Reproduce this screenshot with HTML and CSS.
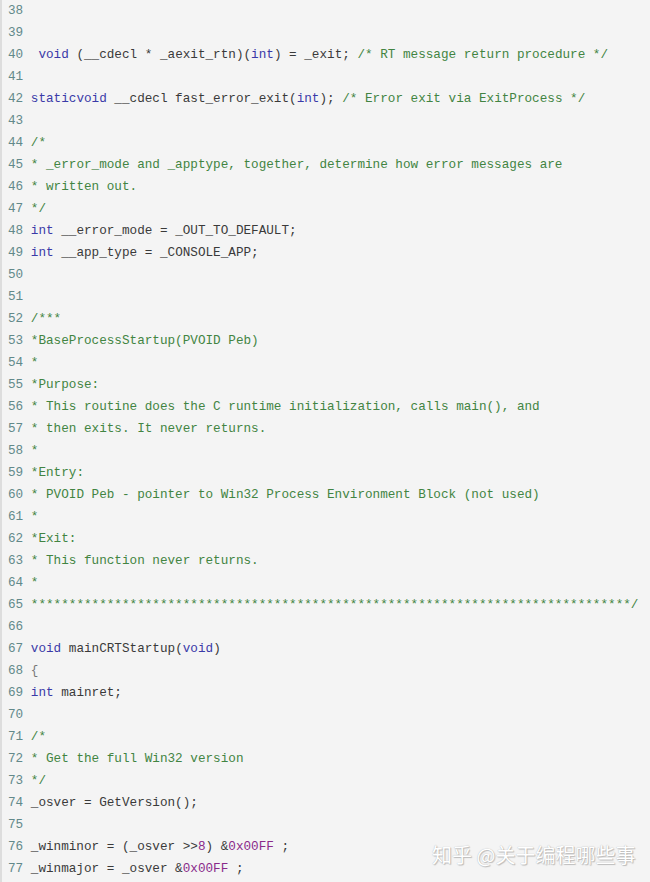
FILE: index.html
```html
<!DOCTYPE html>
<html>
<head>
<meta charset="utf-8">
<link rel="stylesheet" href="styles.css">
</head>
<body>
<div class="code">
<div class="line"><span class="ln">38</span></div>
<div class="line"><span class="ln">39</span></div>
<div class="line"><span class="ln">40</span>  <span class="kw">void</span> (__cdecl * _aexit_rtn)(<span class="kw">int</span>) = _exit; <span class="cm">/* RT message return procedure */</span></div>
<div class="line"><span class="ln">41</span></div>
<div class="line"><span class="ln">42</span> <span class="kw">staticvoid</span> __cdecl fast_error_exit(<span class="kw">int</span>); <span class="cm">/* Error exit via ExitProcess */</span></div>
<div class="line"><span class="ln">43</span></div>
<div class="line"><span class="ln">44</span> <span class="cm">/*</span></div>
<div class="line"><span class="ln">45</span> <span class="cm">* _error_mode and _apptype, together, determine how error messages are</span></div>
<div class="line"><span class="ln">46</span> <span class="cm">* written out.</span></div>
<div class="line"><span class="ln">47</span> <span class="cm">*/</span></div>
<div class="line"><span class="ln">48</span> <span class="kw">int</span> __error_mode = _OUT_TO_DEFAULT;</div>
<div class="line"><span class="ln">49</span> <span class="kw">int</span> __app_type = _CONSOLE_APP;</div>
<div class="line"><span class="ln">50</span></div>
<div class="line"><span class="ln">51</span></div>
<div class="line"><span class="ln">52</span> <span class="cm">/***</span></div>
<div class="line"><span class="ln">53</span> <span class="cm">*BaseProcessStartup(PVOID Peb)</span></div>
<div class="line"><span class="ln">54</span> <span class="cm">*</span></div>
<div class="line"><span class="ln">55</span> <span class="cm">*Purpose:</span></div>
<div class="line"><span class="ln">56</span> <span class="cm">* This routine does the C runtime initialization, calls main(), and</span></div>
<div class="line"><span class="ln">57</span> <span class="cm">* then exits. It never returns.</span></div>
<div class="line"><span class="ln">58</span> <span class="cm">*</span></div>
<div class="line"><span class="ln">59</span> <span class="cm">*Entry:</span></div>
<div class="line"><span class="ln">60</span> <span class="cm">* PVOID Peb - pointer to Win32 Process Environment Block (not used)</span></div>
<div class="line"><span class="ln">61</span> <span class="cm">*</span></div>
<div class="line"><span class="ln">62</span> <span class="cm">*Exit:</span></div>
<div class="line"><span class="ln">63</span> <span class="cm">* This function never returns.</span></div>
<div class="line"><span class="ln">64</span> <span class="cm">*</span></div>
<div class="line"><span class="ln">65</span> <span class="cm">*******************************************************************************/</span></div>
<div class="line"><span class="ln">66</span></div>
<div class="line"><span class="ln">67</span> <span class="kw">void</span> mainCRTStartup(<span class="kw">void</span>)</div>
<div class="line"><span class="ln">68</span> <span class="pn">{</span></div>
<div class="line"><span class="ln">69</span> <span class="kw">int</span> mainret;</div>
<div class="line"><span class="ln">70</span></div>
<div class="line"><span class="ln">71</span> <span class="cm">/*</span></div>
<div class="line"><span class="ln">72</span> <span class="cm">* Get the full Win32 version</span></div>
<div class="line"><span class="ln">73</span> <span class="cm">*/</span></div>
<div class="line"><span class="ln">74</span> _osver = GetVersion();</div>
<div class="line"><span class="ln">75</span></div>
<div class="line"><span class="ln">76</span> _winminor = (_osver &gt;&gt;<span class="nm">8</span>) &amp;<span class="nm">0x00FF</span> ;</div>
<div class="line"><span class="ln">77</span> _winmajor = _osver &amp;<span class="nm">0x00FF</span> ;</div>
</div>
<div class="watermark">知乎 @关于编程哪些事</div>
</body>
</html>
```
FILE: styles.css
```css
html, body {
  margin: 0;
  padding: 0;
  background: #f4f4f4;
}
body {
  width: 650px;
  height: 882px;
  overflow: hidden;
  position: relative;
}
.code {
  border-left: 2px solid #dddddd;
  padding-left: 6px;
  height: 882px;
  box-sizing: border-box;
  font-family: "Liberation Mono", "Courier New", monospace;
  font-size: 12.67px;
  color: #3a3a3a;
}
.line {
  height: 22px;
  line-height: 22px;
  white-space: pre;
}
.ln { color: #62898a; }
.kw { color: #3a3aa8; }
.cm { color: #428442; }
.nm { color: #8a2a8a; }
.pn { color: #777777; }
.watermark {
  position: absolute;
  left: 432px;
  top: 842px;
  font-family: "Noto Sans CJK SC", sans-serif;
  font-size: 20px;
  line-height: 26px;
  color: #ffffff;
  text-shadow: 0 0 1px #a8a8a8, 1px 1px 1px #bdbdbd;
  white-space: nowrap;
}
```
